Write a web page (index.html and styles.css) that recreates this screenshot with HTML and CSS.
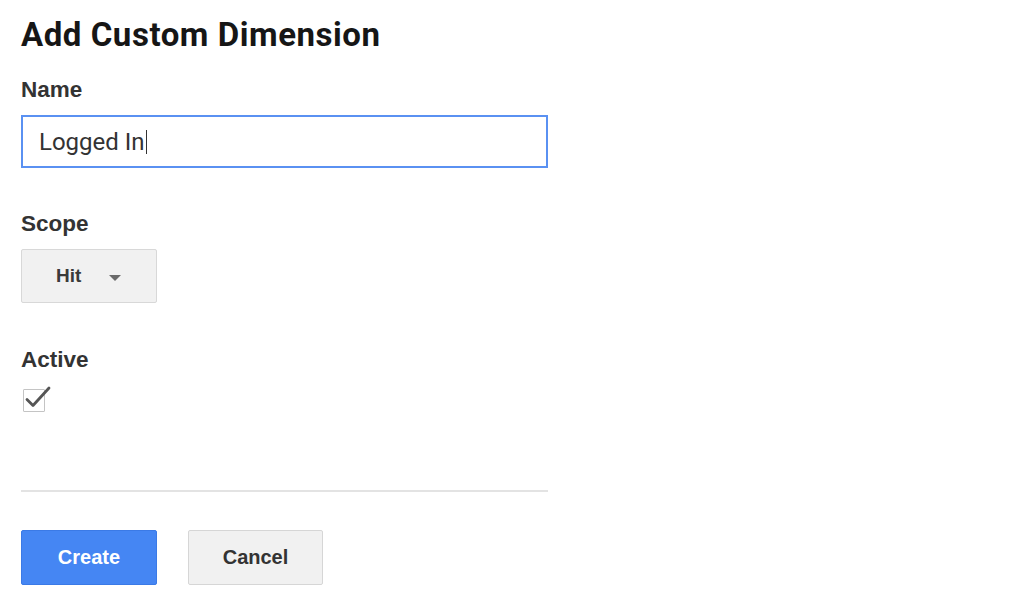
FILE: index.html
```html
<!DOCTYPE html>
<html>
<head>
<meta charset="utf-8">
<link rel="stylesheet" href="styles.css">
</head>
<body>
<main class="form">
  <h1 class="title">Add Custom Dimension</h1>

  <section class="field field-name">
    <div class="label">Name</div>
    <div class="text-input"><span class="value">Logged In</span><span class="caret"></span></div>
  </section>

  <section class="field field-scope">
    <div class="label">Scope</div>
    <div class="select-btn"><span class="select-text">Hit</span><span class="select-arrow"></span></div>
  </section>

  <section class="field field-active">
    <div class="label">Active</div>
    <div class="checkbox">
      <svg class="check" width="30" height="28" viewBox="0 0 30 28">
        <path d="M5 15.5 L11 21.5 L27 4" fill="none" stroke="#555555" stroke-width="2.8" stroke-linecap="round" stroke-linejoin="round"/>
      </svg>
    </div>
  </section>

  <div class="divider"></div>

  <div class="actions">
    <button class="btn btn-primary">Create</button>
    <button class="btn btn-default">Cancel</button>
  </div>
</main>
</body>
</html>
```

FILE: styles.css
```css
html, body {
  margin: 0;
  padding: 0;
  background: #ffffff;
}

body {
  font-family: Roboto, "Liberation Sans", Arial, sans-serif;
  color: #333333;
}

.form {
  padding: 17px 0 0 21px;
  width: 527px;
  display: flex;
  flex-direction: column;
}

.title {
  margin: 0;
  font-size: 33px;
  line-height: 36px;
  letter-spacing: 0.55px;
  font-weight: 700;
  color: #161616;
}

.field {
  display: flex;
  flex-direction: column;
  align-items: flex-start;
}

.field-name { margin-top: 25px; }
.field-scope { margin-top: 44px; }
.field-active { margin-top: 45px; }

.label {
  font-family: "Liberation Sans", Arial, sans-serif;
  font-size: 22.5px;
  line-height: 24px;
  font-weight: 700;
  color: #333333;
  margin-bottom: 13px;
}

.text-input {
  box-sizing: border-box;
  width: 527px;
  height: 53px;
  border: 2px solid #5a91f2;
  background: #ffffff;
  display: flex;
  align-items: center;
  padding-left: 16px;
  font-size: 24px;
  color: #333333;
}

.caret {
  display: inline-block;
  width: 1px;
  height: 24px;
  background: #333333;
  margin-left: 1px;
}

.select-btn {
  box-sizing: border-box;
  width: 136px;
  height: 54px;
  border: 1px solid #d8d8d8;
  border-radius: 2px;
  background: #f1f1f1;
  display: flex;
  align-items: center;
  padding-left: 34px;
}

.select-text {
  font-family: "Liberation Sans", Arial, sans-serif;
  font-size: 19px;
  font-weight: 700;
  color: #3a3a3a;
}

.select-arrow {
  width: 0;
  height: 0;
  border-left: 6px solid transparent;
  border-right: 6px solid transparent;
  border-top: 6px solid #6a6a6a;
  margin-left: 28px;
  margin-top: 3px;
}

.field-active .label { margin-bottom: 17px; }

.checkbox {
  position: relative;
  box-sizing: border-box;
  width: 22px;
  height: 23px;
  margin-left: 2px;
  border: 1px solid #c4c4c4;
  border-radius: 1px;
  background: #ffffff;
}

.check {
  position: absolute;
  left: -2px;
  top: -6px;
}

.divider {
  margin-top: 78px;
  height: 2px;
  background: #e3e3e3;
  width: 527px;
}

.actions {
  margin-top: 38px;
  display: flex;
  gap: 31px;
}

.btn {
  box-sizing: border-box;
  width: 136px;
  height: 55px;
  border-radius: 2px;
  font-family: "Liberation Sans", Arial, sans-serif;
  font-size: 20px;
  font-weight: 700;
  padding: 0;
  cursor: pointer;
}

.btn-primary {
  background: #4586f3;
  border: 1px solid #3b7ae6;
  color: #ffffff;
}

.btn-default {
  width: 135px;
  background: #f1f1f1;
  border: 1px solid #d6d6d6;
  color: #333333;
}
```
